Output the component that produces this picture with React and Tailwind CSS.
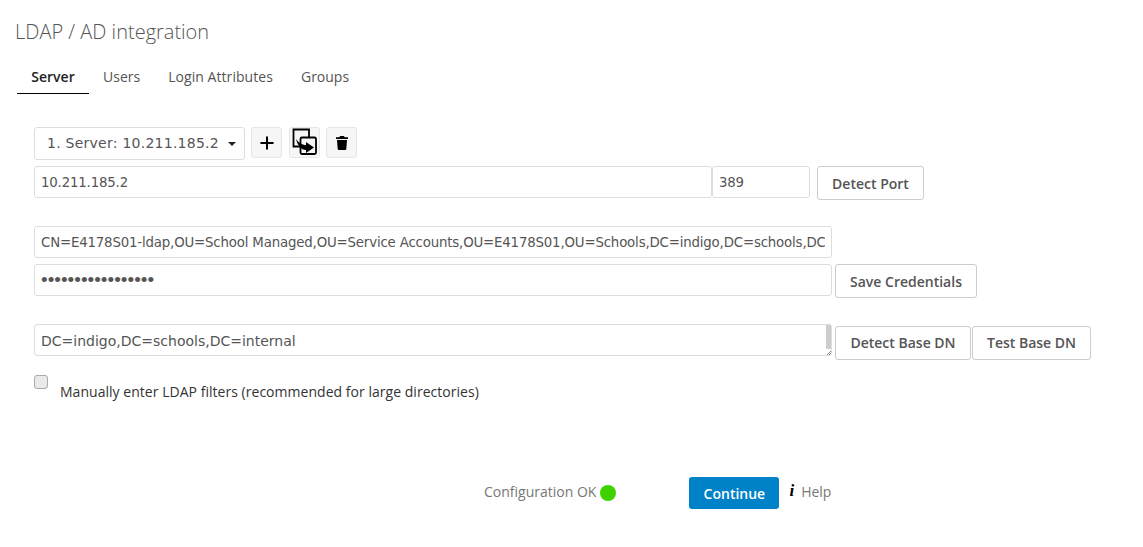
import React from 'react';
import { Plus } from 'lucide-react';

const inputCls = "h-8 border border-[#ddd] rounded-[3px] px-[6px] text-[#555] bg-white outline-none font-['DejaVu_Sans',sans-serif]";
const smallText = "text-[13.33px] tracking-[-0.17px]";
const btnCls = "border border-[#ccc] rounded-[3px] bg-white text-[14px] font-semibold text-[#555] flex items-center justify-center";
const iconBtnCls = "w-[31px] h-[31px] border border-[#e6e6e6] rounded-[3px] bg-[#f6f6f6] flex items-center justify-center";

function CopyIcon() {
  return (
    <svg width="31" height="31" viewBox="0 0 31 31" fill="none" className="overflow-visible">
      <path d="M11 19.500H4.500V2.500H20V10" stroke="#000" strokeWidth="1.8" />
      <rect x="11.500" y="10.500" width="15.500" height="16.500" rx="1.500" stroke="#000" strokeWidth="1.800" />
      <path d="M7 12C9.500 15.500 13 18 17 18V15L25 20.500L17 26V23C12 23 8.500 18 7 12z" fill="#000" />
    </svg>
  );
}

function TrashIcon() {
  return (
    <svg width="12" height="14" viewBox="0 0 12 14" fill="#000">
      <path d="M4 0h4l.7 1.300H12V3H0V1.300h3.300z" />
      <path d="M1 4h10l-.7 9a1 1 0 0 1-1 1H2.700a1 1 0 0 1-1-1z" />
    </svg>
  );
}

function App() {
  return (
    <div className="w-[1143px] h-[547px] bg-white overflow-hidden font-['Open_Sans',sans-serif] text-[#555]">
      <h1 className="pl-[15px] pt-[18px] text-[20px] leading-[28px] font-light text-[#555]">LDAP / AD integration</h1>

      {/* tabs */}
      <div className="flex pl-[17px] mt-[16px] text-[14px] leading-[19px]">
        <div className="w-[72px] h-[32px] border-b border-black text-center pt-[5px] font-semibold text-[#222]">Server</div>
        <div className="ml-[14px] pt-[5px]">Users</div>
        <div className="ml-[28px] pt-[5px] tracking-[0.06px]">Login Attributes</div>
        <div className="ml-[28px] pt-[5px]">Groups</div>
      </div>

      <div className="pl-[34px] pt-[33px]">
        {/* server row */}
        <div className="flex gap-[6px] items-start">
          <div className="w-[211px] h-[33px] border border-[#ddd] rounded-[3px] flex items-center pl-[12px] text-[14px] tracking-[0.25px] font-['DejaVu_Sans',sans-serif] text-[#555] whitespace-nowrap">
            1. Server: 10.211.185.2
            <span className="ml-[9px] w-0 h-0 border-x-[4px] border-x-transparent border-t-[4px] border-t-[#222]"></span>
          </div>
          <div className={iconBtnCls}><Plus size={20} strokeWidth={2.4} color="#000" /></div>
          <div className={`${iconBtnCls} ml-[1px]`}><CopyIcon /></div>
          <div className={iconBtnCls}><TrashIcon /></div>
        </div>

        <div className="flex items-start mt-[6px]">
          <input readOnly value="10.211.185.2" className={`${inputCls} ${smallText} w-[678px]`} />
          <input readOnly value="389" className={`${inputCls} ${smallText} w-[98px]`} />
          <div className={`${btnCls} ml-[7px] w-[107px] h-[34px]`}>Detect Port</div>
        </div>

        <input readOnly value="CN=E4178S01-ldap,OU=School Managed,OU=Service Accounts,OU=E4178S01,OU=Schools,DC=indigo,DC=schools,DC=internal" className={`${inputCls} ${smallText} w-[798px] block mt-[26px]`} />

        <div className="flex items-start mt-[6px]">
          <input readOnly type="password" value="aaaaaaaaaaaaaaaaa" className="h-8 w-[798px] border border-[#ddd] rounded-[3px] px-[6px] text-[19px] text-[#555] bg-white outline-none font-['Liberation_Sans',sans-serif]" />
          <div className={`${btnCls} ml-[3px] w-[142px] h-[34px]`}>Save Credentials</div>
        </div>

        <div className="flex items-start mt-[26px]">
          <div className="relative">
            <input readOnly value="DC=indigo,DC=schools,DC=internal" className={`${inputCls} text-[14px] pt-[2px] w-[798px] block`} />
            <span className="absolute right-[1px] top-[1px] w-[5px] h-[24px] bg-[#cdcdcd]"></span>
            {/* textarea resize grip */}
            <svg width="4" height="4" viewBox="0 0 4 4" className="absolute right-[1px] bottom-[1px]">
              <path d="M0 4L4 0M2 4L4 2" stroke="#666" strokeWidth="0.8" />
            </svg>
          </div>
          <div className={`${btnCls} ml-[3px] mt-[2px] w-[136px] h-[34px] pb-[1px]`}>Detect Base DN</div>
          <div className={`${btnCls} ml-[1px] mt-[2px] w-[119px] h-[34px] pb-[1px]`}>Test Base DN</div>
        </div>

        <div className="flex items-start mt-[15px]">
          <span className="w-[14px] h-[14px] border border-[#aaa] rounded-[3px] bg-[#e9e9e9]"></span>
          <span className="ml-[12px] mt-[7px] text-[14px] leading-[19px] text-[#333] tracking-[0.03px]">Manually enter LDAP filters (recommended for large directories)</span>
        </div>

        {/* footer */}
        <div className="flex items-center mt-[76px] pl-[450px] text-[14px]">
          <span className="text-[#777] -mt-[3px]">Configuration OK</span>
          <span className="ml-[4px] w-[16px] h-[16px] rounded-full bg-[#3fd200]"></span>
          <div className="ml-[73px] w-[90px] h-[32px] rounded-[3px] bg-[#0082c9] text-white font-semibold flex items-center justify-center">Continue</div>
          <span className="ml-[10px] -mt-[5px] font-['Liberation_Serif',serif] italic font-bold text-[#000] text-[17px]">i</span>
          <span className="ml-[7px] -mt-[3px] text-[#777]">Help</span>
        </div>
      </div>
    </div>
  );
}

export default App;
